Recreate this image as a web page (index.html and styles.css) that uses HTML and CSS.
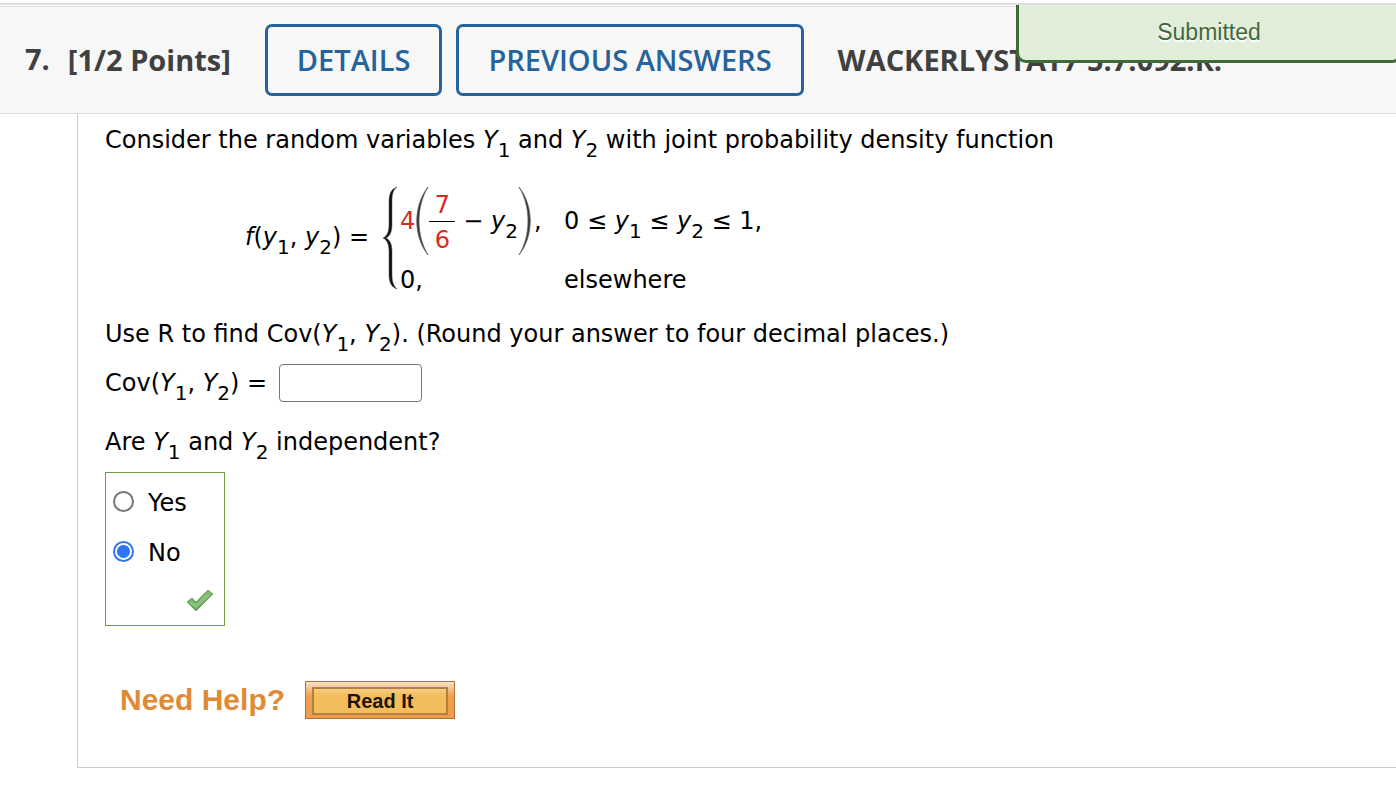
FILE: index.html
```html
<!DOCTYPE html>
<html lang="en">
<head>
<meta charset="utf-8">
<title>Question 7</title>
<link rel="stylesheet" href="styles.css">
</head>
<body>
<div class="top-rule"></div>
<header class="question-header">
  <h2 class="number">7.</h2>
  <span class="points">[1/2 Points]</span>
  <button class="outline-button" type="button">DETAILS</button>
  <button class="outline-button" type="button">PREVIOUS ANSWERS</button>
  <span class="source">WACKERLYSTAT7 5.7.092.R.</span>
  <div class="status" role="status">Submitted</div>
</header>
<main class="question">
  <p class="line">Consider the random variables <i>Y</i><sub>1</sub> and <i>Y</i><sub>2</sub> with joint probability density function</p>
  <div class="formula">
    <div class="lhs"><i>f</i>(<i>y</i><sub>1</sub>, <i>y</i><sub>2</sub>) =</div>
    <svg class="brace" viewBox="0 0 16 104" aria-hidden="true"><path d="M15 1C9 3 7 8 7 16V38C7 46 5 50 1 52C5 54 7 58 7 66V88C7 96 9 101 15 103C11 99 10 95 10 88V66C10 58 8 54 4 52C8 50 10 46 10 38V16C10 8 11 4 15 1Z" fill="#111" stroke="#555" stroke-width=".5"/></svg>
    <div class="cases">
      <div class="expression">
        <span class="red">4</span>
        <svg class="paren" viewBox="0 0 14 70" aria-hidden="true"><path d="M13 1C-2 20-2 50 13 69C1 49 1 21 13 1Z" fill="#333" stroke="#666" stroke-width=".8"/></svg>
        <span class="fraction"><span>7</span><span>6</span></span>
        <span class="term">− <i>y</i><sub>2</sub></span>
        <svg class="paren" viewBox="0 0 14 70" aria-hidden="true"><path d="M1 1C16 20 16 50 1 69C13 49 13 21 1 1Z" fill="#333" stroke="#666" stroke-width=".8"/></svg>
        <span class="comma">,</span>
      </div>
      <div class="condition">0 ≤ <i>y</i><sub>1</sub> ≤ <i>y</i><sub>2</sub> ≤ 1,</div>
      <div>0,</div>
      <div>elsewhere</div>
    </div>
  </div>
  <p class="line">Use R to find Cov(<i>Y</i><sub>1</sub>, <i>Y</i><sub>2</sub>). (Round your answer to four decimal places.)</p>
  <div class="answer">
    <label for="cov">Cov(<i>Y</i><sub>1</sub>, <i>Y</i><sub>2</sub>) =</label>
    <input class="answer-input" id="cov" type="text">
  </div>
  <p class="line" id="independent">Are <i>Y</i><sub>1</sub> and <i>Y</i><sub>2</sub> independent?</p>
  <div class="choices" role="radiogroup" aria-labelledby="independent">
    <label class="choice"><input type="radio" name="independent"><span>Yes</span></label>
    <label class="choice"><input type="radio" name="independent" checked><span>No</span></label>
    <svg class="check" viewBox="0 0 28 24" role="img" aria-label="Correct">
      <defs><linearGradient id="leaf" x1="0" y1="0" x2="0" y2="1"><stop offset="0" stop-color="#86ba76"/><stop offset="1" stop-color="#64a05a"/></linearGradient></defs>
      <path d="M1 13L6 9L10 13L22 1L27 5L10 22Z" fill="url(#leaf)" stroke="#74a867" stroke-linejoin="round"/>
      <path d="M4 13L10 17L23 5" fill="none" stroke="#8cc47c" stroke-width="3"/>
    </svg>
  </div>
  <div class="help">
    <span class="help-title">Need Help?</span>
    <button class="read-button" type="button"><span>Read It</span></button>
  </div>
</main>
</body>
</html>
```
FILE: styles.css
```css
* { box-sizing: border-box; }

body {
  margin: 0;
  padding-top: 3px;
  background: #fff;
  color: #000;
  font: 24px/32px "DejaVu Sans", sans-serif;
  overflow-x: hidden;
}

.top-rule {
  height: 3px;
  border-top: 2px solid #dcdcdc;
}

.question-header {
  position: relative;
  display: flex;
  align-items: center;
  height: 108px;
  padding-left: 25px;
  border-top: 1px solid #ddd;
  border-bottom: 1px solid #ddd;
  background: #f7f7f7;
  color: #404040;
  font: bold 29px/40px "Open Sans", sans-serif;
  white-space: nowrap;
}

.number {
  margin: 0 18px 2px 0;
  font: inherit;
}

.points { margin-right: 34px; }

.outline-button {
  height: 72px;
  margin-right: 14px;
  padding: 0 29px;
  border: 3px solid #26629b;
  border-radius: 7px;
  background: transparent;
  color: #26629b;
  font: 600 29px/40px "Open Sans", sans-serif;
}

.source { margin-left: 20px; }

.status {
  position: absolute;
  top: -2px;
  right: -6px;
  width: 386px;
  height: 58px;
  border: 3px solid #42683a;
  border-top: 0;
  border-radius: 0 0 10px 10px;
  background: #e1eeda;
  color: #42683a;
  font: 23px/54px "Liberation Sans", sans-serif;
  text-align: center;
  text-shadow: 0 2px 0 #fff;
}

.question {
  margin-left: 77px;
  padding: 10px 0 48px 27px;
  border-left: 1px solid #ccc;
  border-bottom: 1px solid #ccc;
}

.line { margin: 0; }

sub {
  font-size: 20px;
  line-height: 0;
  vertical-align: -9px;
}

.formula {
  display: flex;
  align-items: center;
  margin: 26px 0 22px 140px;
  white-space: nowrap;
}

.lhs { padding-bottom: 4px; }

.brace {
  width: 16px;
  height: 104px;
  margin: 0 2px 2px 13px;
}

.cases {
  display: grid;
  grid-template-columns: 164px auto;
  grid-template-rows: 78px 32px;
  row-gap: 4px;
}

.expression {
  display: flex;
  align-items: center;
}

.condition { align-self: center; }

.paren {
  width: 14px;
  height: 70px;
}

.red, .fraction { color: #d22d20; }

.fraction {
  display: flex;
  flex-direction: column;
  width: 26px;
  line-height: 36px;
  text-align: center;
}

.fraction span:first-child {
  line-height: 32px;
  padding-top: 4px;
}

.fraction span:last-child { border-top: 1px solid #000; }

.term { margin-left: 8px; }

.comma { margin-left: 2px; }

.answer {
  display: flex;
  align-items: center;
  gap: 12px;
  margin: 14px 0 24px;
}

.answer-input {
  width: 143px;
  height: 38px;
  border: 1px solid #767676;
  border-radius: 4px;
  background: #fff;
  font: inherit;
}

.choices {
  display: flex;
  flex-direction: column;
  gap: 18px;
  width: 120px;
  margin-top: 14px;
  padding: 14px 10px 12px 7px;
  border: 1px solid #6b9f42;
}

.choice {
  display: flex;
  align-items: center;
  gap: 14px;
}

.choice input {
  appearance: none;
  width: 21px;
  height: 21px;
  margin: 0 0 4px;
  border: 2px solid #767676;
  border-radius: 50%;
  background: #fff;
}

.choice input:checked {
  border-color: #2f75f6;
  background: radial-gradient(circle, #2f75f6 6px, #fff 7px);
}

.check {
  align-self: flex-end;
  width: 28px;
  height: 24px;
  margin-top: 2px;
}

.help {
  display: flex;
  align-items: center;
  gap: 20px;
  margin: 55px 0 0 15px;
}

.help-title {
  color: #e08a35;
  font: bold 30px/38px "Liberation Sans", sans-serif;
}

.read-button {
  width: 150px;
  height: 38px;
  padding: 5px 6px;
  border: 1px solid #ae7138;
  background: linear-gradient(#fce3ca, #f5bb84 8px, #ee9f4d 15px, #ed9e4c);
}

.read-button span {
  display: block;
  border: 2px solid #b18140;
  background: linear-gradient(#f8cf8a, #f3bd5d 6px);
  color: #1c1507;
  font: bold 20px/24px "Liberation Sans", sans-serif;
}
```
